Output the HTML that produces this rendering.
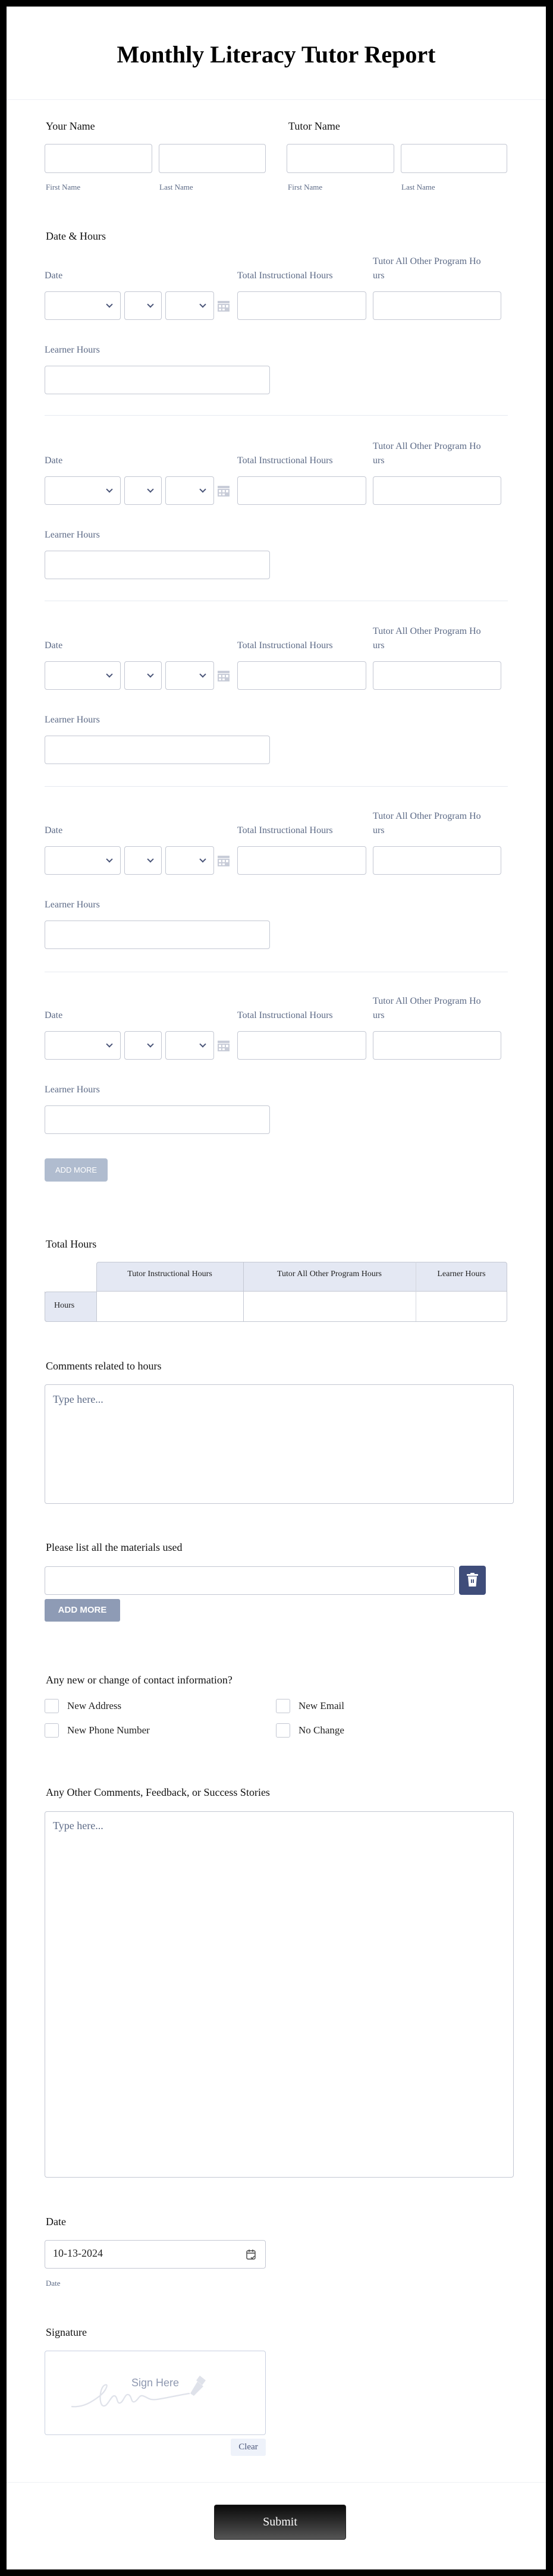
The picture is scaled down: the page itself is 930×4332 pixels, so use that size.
<!DOCTYPE html>
<html><head><meta charset="utf-8">
<style>
*{box-sizing:border-box;margin:0;padding:0}
html,body{width:930px;height:4332px;background:#000;overflow:hidden}
body{position:relative;font-family:"Liberation Serif",serif}
#page{position:absolute;left:11px;top:11px;width:907px;height:4310px;background:#fff}
.a{position:absolute}
.lbl{position:absolute;font-size:18px;color:#111;line-height:24px;white-space:nowrap}
.sub{position:absolute;font-size:13px;color:#5c6a86;line-height:18px;white-space:nowrap}
.fl{position:absolute;font-size:16px;color:#5c6a86;line-height:24px;white-space:nowrap}
.inp{position:absolute;border:1px solid #c3c7d2;border-radius:4px;background:#fff}
.sel::after{content:"";position:absolute;right:14px;top:17px;width:6px;height:6px;border-right:2px solid #4a5578;border-bottom:2px solid #4a5578;transform:rotate(45deg)}
.hr{position:absolute;left:75px;width:779px;height:1px;background:#e6e9f0}
.cb{position:absolute;width:24px;height:24px;border:1px solid #c3c7d2;border-radius:3px;background:#fff}
.opt{position:absolute;font-size:17px;color:#222;line-height:24px;white-space:nowrap}
.cal{position:absolute;width:20px;height:20px}
</style></head><body>
<div class="a" style="left:0;top:0;width:930px;height:4332px;background:#000"></div>
<div class="a" style="left:11px;top:11px;width:907px;height:4310px;background:#fff"></div>

<div class="a" style="left:11px;top:68px;width:907px;text-align:center;font-size:40px;font-weight:bold;line-height:48px;color:#000">Monthly Literacy Tutor Report</div>
<div class="a" style="left:11px;top:167px;width:907px;height:1px;background:#eef0f4"></div>

<div class="lbl" style="left:77px;top:200px">Your Name</div>
<div class="lbl" style="left:485px;top:200px">Tutor Name</div>
<div class="inp" style="left:75px;top:242px;width:181px;height:49px"></div>
<div class="inp" style="left:267px;top:242px;width:180px;height:49px"></div>
<div class="inp" style="left:482px;top:242px;width:181px;height:49px"></div>
<div class="inp" style="left:674px;top:242px;width:179px;height:49px"></div>
<div class="sub" style="left:77px;top:306px">First Name</div>
<div class="sub" style="left:268px;top:306px">Last Name</div>
<div class="sub" style="left:484px;top:306px">First Name</div>
<div class="sub" style="left:675px;top:306px">Last Name</div>

<div class="lbl" style="left:77px;top:385px">Date &amp; Hours</div>

<!-- block template repeated -->
<div class="a" style="left:0;top:430px;width:930px;height:240px">
<div class="fl" style="left:627px;top:-2px">Tutor All Other Program Ho</div>
<div class="fl" style="left:627px;top:22px">urs</div>
<div class="fl" style="left:75px;top:22px">Date</div>
<div class="fl" style="left:399px;top:22px">Total Instructional Hours</div>
<div class="inp sel" style="left:75px;top:60px;width:128px;height:48px"></div>
<div class="inp sel" style="left:209px;top:60px;width:63px;height:48px"></div>
<div class="inp sel" style="left:278px;top:60px;width:82px;height:48px"></div>
<svg class="cal" style="left:366px;top:74px" viewBox="0 0 20 20"><rect x="0" y="2" width="20" height="4" fill="#c8ccd8"/><rect x="0" y="7" width="20" height="13" fill="#c8ccd8"/><g fill="#fff"><rect x="2" y="9" width="4" height="4"/><rect x="8" y="9" width="4" height="4"/><rect x="14" y="9" width="4" height="4"/><rect x="2" y="15" width="4" height="3"/><rect x="8" y="15" width="4" height="3"/></g></svg>
<div class="inp" style="left:399px;top:60px;width:217px;height:48px"></div>
<div class="inp" style="left:627px;top:60px;width:216px;height:48px"></div>
<div class="fl" style="left:75px;top:147px">Learner Hours</div>
<div class="inp" style="left:75px;top:185px;width:379px;height:48px"></div>
</div>
<div class="hr" style="top:698px"></div>

<div class="a" style="left:0;top:741px;width:930px;height:240px">
<div class="fl" style="left:627px;top:-2px">Tutor All Other Program Ho</div>
<div class="fl" style="left:627px;top:22px">urs</div>
<div class="fl" style="left:75px;top:22px">Date</div>
<div class="fl" style="left:399px;top:22px">Total Instructional Hours</div>
<div class="inp sel" style="left:75px;top:60px;width:128px;height:48px"></div>
<div class="inp sel" style="left:209px;top:60px;width:63px;height:48px"></div>
<div class="inp sel" style="left:278px;top:60px;width:82px;height:48px"></div>
<svg class="cal" style="left:366px;top:74px" viewBox="0 0 20 20"><rect x="0" y="2" width="20" height="4" fill="#c8ccd8"/><rect x="0" y="7" width="20" height="13" fill="#c8ccd8"/><g fill="#fff"><rect x="2" y="9" width="4" height="4"/><rect x="8" y="9" width="4" height="4"/><rect x="14" y="9" width="4" height="4"/><rect x="2" y="15" width="4" height="3"/><rect x="8" y="15" width="4" height="3"/></g></svg>
<div class="inp" style="left:399px;top:60px;width:217px;height:48px"></div>
<div class="inp" style="left:627px;top:60px;width:216px;height:48px"></div>
<div class="fl" style="left:75px;top:147px">Learner Hours</div>
<div class="inp" style="left:75px;top:185px;width:379px;height:48px"></div>
</div>
<div class="hr" style="top:1010px"></div>

<div class="a" style="left:0;top:1052px;width:930px;height:240px">
<div class="fl" style="left:627px;top:-2px">Tutor All Other Program Ho</div>
<div class="fl" style="left:627px;top:22px">urs</div>
<div class="fl" style="left:75px;top:22px">Date</div>
<div class="fl" style="left:399px;top:22px">Total Instructional Hours</div>
<div class="inp sel" style="left:75px;top:60px;width:128px;height:48px"></div>
<div class="inp sel" style="left:209px;top:60px;width:63px;height:48px"></div>
<div class="inp sel" style="left:278px;top:60px;width:82px;height:48px"></div>
<svg class="cal" style="left:366px;top:74px" viewBox="0 0 20 20"><rect x="0" y="2" width="20" height="4" fill="#c8ccd8"/><rect x="0" y="7" width="20" height="13" fill="#c8ccd8"/><g fill="#fff"><rect x="2" y="9" width="4" height="4"/><rect x="8" y="9" width="4" height="4"/><rect x="14" y="9" width="4" height="4"/><rect x="2" y="15" width="4" height="3"/><rect x="8" y="15" width="4" height="3"/></g></svg>
<div class="inp" style="left:399px;top:60px;width:217px;height:48px"></div>
<div class="inp" style="left:627px;top:60px;width:216px;height:48px"></div>
<div class="fl" style="left:75px;top:147px">Learner Hours</div>
<div class="inp" style="left:75px;top:185px;width:379px;height:48px"></div>
</div>
<div class="hr" style="top:1322px"></div>

<div class="a" style="left:0;top:1363px;width:930px;height:240px">
<div class="fl" style="left:627px;top:-2px">Tutor All Other Program Ho</div>
<div class="fl" style="left:627px;top:22px">urs</div>
<div class="fl" style="left:75px;top:22px">Date</div>
<div class="fl" style="left:399px;top:22px">Total Instructional Hours</div>
<div class="inp sel" style="left:75px;top:60px;width:128px;height:48px"></div>
<div class="inp sel" style="left:209px;top:60px;width:63px;height:48px"></div>
<div class="inp sel" style="left:278px;top:60px;width:82px;height:48px"></div>
<svg class="cal" style="left:366px;top:74px" viewBox="0 0 20 20"><rect x="0" y="2" width="20" height="4" fill="#c8ccd8"/><rect x="0" y="7" width="20" height="13" fill="#c8ccd8"/><g fill="#fff"><rect x="2" y="9" width="4" height="4"/><rect x="8" y="9" width="4" height="4"/><rect x="14" y="9" width="4" height="4"/><rect x="2" y="15" width="4" height="3"/><rect x="8" y="15" width="4" height="3"/></g></svg>
<div class="inp" style="left:399px;top:60px;width:217px;height:48px"></div>
<div class="inp" style="left:627px;top:60px;width:216px;height:48px"></div>
<div class="fl" style="left:75px;top:147px">Learner Hours</div>
<div class="inp" style="left:75px;top:185px;width:379px;height:48px"></div>
</div>
<div class="hr" style="top:1634px"></div>

<div class="a" style="left:0;top:1674px;width:930px;height:240px">
<div class="fl" style="left:627px;top:-2px">Tutor All Other Program Ho</div>
<div class="fl" style="left:627px;top:22px">urs</div>
<div class="fl" style="left:75px;top:22px">Date</div>
<div class="fl" style="left:399px;top:22px">Total Instructional Hours</div>
<div class="inp sel" style="left:75px;top:60px;width:128px;height:48px"></div>
<div class="inp sel" style="left:209px;top:60px;width:63px;height:48px"></div>
<div class="inp sel" style="left:278px;top:60px;width:82px;height:48px"></div>
<svg class="cal" style="left:366px;top:74px" viewBox="0 0 20 20"><rect x="0" y="2" width="20" height="4" fill="#c8ccd8"/><rect x="0" y="7" width="20" height="13" fill="#c8ccd8"/><g fill="#fff"><rect x="2" y="9" width="4" height="4"/><rect x="8" y="9" width="4" height="4"/><rect x="14" y="9" width="4" height="4"/><rect x="2" y="15" width="4" height="3"/><rect x="8" y="15" width="4" height="3"/></g></svg>
<div class="inp" style="left:399px;top:60px;width:217px;height:48px"></div>
<div class="inp" style="left:627px;top:60px;width:216px;height:48px"></div>
<div class="fl" style="left:75px;top:147px">Learner Hours</div>
<div class="inp" style="left:75px;top:185px;width:379px;height:48px"></div>
</div>

<div class="a" style="left:75px;top:1948px;width:106px;height:39px;background:#b0bccf;border-radius:4px;color:#fff;font-family:'Liberation Sans',sans-serif;font-size:13px;line-height:39px;text-align:center">ADD MORE</div>

<div class="lbl" style="left:77px;top:2080px">Total Hours</div>
<div class="a" style="left:162px;top:2122px;width:691px;height:50px;background:#e4e8f3;border:1px solid #c3c7d2;border-radius:4px 4px 0 0"></div>
<div class="a" style="left:409px;top:2122px;width:1px;height:101px;background:#c3c7d2"></div>
<div class="a" style="left:699px;top:2122px;width:1px;height:101px;background:#d4d7df"></div>
<div class="a" style="left:75px;top:2172px;width:778px;height:51px;border:1px solid #c3c7d2;border-top:none;border-radius:0 0 4px 4px"></div>
<div class="a" style="left:75px;top:2172px;width:88px;height:51px;background:#e4e8f3;border:1px solid #c3c7d2;border-top:1px solid #c3c7d2;border-radius:4px 0 0 4px"></div>
<div class="a" style="left:162px;top:2135px;width:247px;text-align:center;font-size:14px;color:#222">Tutor Instructional Hours</div>
<div class="a" style="left:409px;top:2135px;width:290px;text-align:center;font-size:14px;color:#222">Tutor All Other Program Hours</div>
<div class="a" style="left:699px;top:2135px;width:154px;text-align:center;font-size:14px;color:#222">Learner Hours</div>
<div class="a" style="left:91px;top:2188px;font-size:14px;color:#222">Hours</div>

<div class="lbl" style="left:77px;top:2285px">Comments related to hours</div>
<div class="inp" style="left:75px;top:2328px;width:789px;height:201px"></div>
<div class="a" style="left:89px;top:2343px;font-size:18px;color:#5c6a86">Type here...</div>

<div class="lbl" style="left:77px;top:2590px">Please list all the materials used</div>
<div class="inp" style="left:75px;top:2634px;width:690px;height:48px"></div>
<div class="a" style="left:772px;top:2633px;width:45px;height:49px;background:#3f4d7a;border-radius:4px"></div>
<svg class="a" style="left:784px;top:2645px" width="21" height="24" viewBox="0 0 21 24"><rect x="1" y="2" width="19" height="3" rx="1" fill="#fff"/><rect x="7" y="0" width="7" height="3" rx="1" fill="#fff"/><path d="M3 6h15l-1.5 17h-12z" fill="#fff"/><rect x="8" y="11" width="1.8" height="6" fill="#3f4d7a"/><rect x="11.2" y="11" width="1.8" height="6" fill="#3f4d7a"/></svg>
<div class="a" style="left:75px;top:2689px;width:127px;height:38px;background:#8e9bb5;border-radius:3px;color:#fff;font-family:'Liberation Sans',sans-serif;font-weight:bold;font-size:15px;line-height:38px;text-align:center">ADD MORE</div>

<div class="lbl" style="left:77px;top:2813px">Any new or change of contact information?</div>
<div class="cb" style="left:75px;top:2857px"></div>
<div class="opt" style="left:113px;top:2857px">New Address</div>
<div class="cb" style="left:464px;top:2857px"></div>
<div class="opt" style="left:502px;top:2857px">New Email</div>
<div class="cb" style="left:75px;top:2898px"></div>
<div class="opt" style="left:113px;top:2898px">New Phone Number</div>
<div class="cb" style="left:464px;top:2898px"></div>
<div class="opt" style="left:502px;top:2898px">No Change</div>

<div class="lbl" style="left:77px;top:3002px">Any Other Comments, Feedback, or Success Stories</div>
<div class="inp" style="left:75px;top:3046px;width:789px;height:616px"></div>
<div class="a" style="left:89px;top:3060px;font-size:18px;color:#5c6a86">Type here...</div>

<div class="lbl" style="left:77px;top:3724px">Date</div>
<div class="inp" style="left:75px;top:3767px;width:372px;height:48px"></div>
<div class="a" style="left:89px;top:3779px;font-size:18px;color:#222">10-13-2024</div>
<svg class="a" style="left:414px;top:3782px" width="16" height="18" viewBox="0 0 16 18" fill="none" stroke="#444" stroke-width="1.4"><rect x="1" y="3" width="14" height="14" rx="2"/><path d="M1 7h14M5 1v4M11 1v4M8 14l2 2 4-4"/></svg>
<div class="sub" style="left:77px;top:3831px">Date</div>

<div class="lbl" style="left:77px;top:3910px">Signature</div>
<div class="inp" style="left:75px;top:3953px;width:372px;height:142px;border-color:#c9d0e0"></div>
<div class="a" style="left:75px;top:3997px;width:372px;text-align:center;font-family:'Liberation Sans',sans-serif;font-size:18px;color:#8e98b0">Sign Here</div>
<svg class="a" style="left:115px;top:3995px" width="240" height="70" viewBox="0 0 240 70" fill="none"><path d="M5 52c20 2 35-8 48-18 10-8 16-22 8-18-8 4-10 28-4 34 8 6 14-16 20-16 6 0 4 14 10 12 6-2 8-16 14-14 6 2 4 14 10 12 6-2 8-12 14-10 8 2 10 8 24 6 20-3 40-8 55-10" stroke="#dfe2ea" stroke-width="2.2"/><path d="M205 30l12-20 10 8-16 16z" fill="#dfe2ea"/><path d="M215 8l6-8 10 8-6 8z" fill="#dfe2ea"/></svg>
<div class="a" style="left:388px;top:4101px;width:59px;height:29px;background:#eef2fa;border-radius:3px;font-size:15px;color:#4a5578;text-align:center;line-height:29px">Clear</div>

<div class="a" style="left:11px;top:4174px;width:907px;height:1px;background:#eef0f4"></div>
<div class="a" style="left:360px;top:4212px;width:222px;height:59px;border-radius:4px;background:linear-gradient(#0a0a0a,#2e2e2e 50%,#555);border:1px solid #222;color:#fff;font-size:20px;text-align:center;line-height:57px">Submit</div>
</body></html>
